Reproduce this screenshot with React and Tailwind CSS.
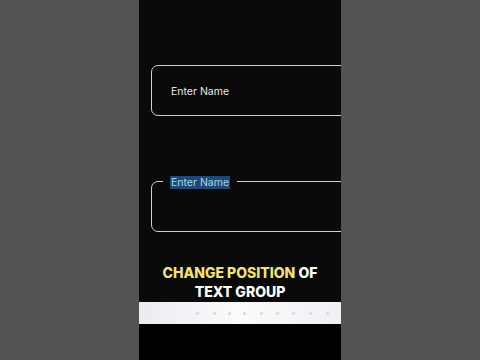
import React from 'react'

const dots = [196, 213, 228, 243, 260, 276, 292, 309, 326]

export default function App() {
  return (
    <div className="w-[480px] h-[360px] bg-[#535353] flex overflow-hidden"
      style={{ fontFamily: 'Inter, "Noto Sans", sans-serif' }}>
      <div className="ml-[139px] w-[202px] h-full bg-[#0a0a0a] overflow-hidden flex flex-col">
        {/* Plain input */}
        <div className="mt-[65px] ml-[12px] w-[230px] h-[51px] shrink-0 rounded-[7px] border border-[#cfcfcf]
          flex items-center pl-[19px] pt-[2px] text-[10.5px] text-[#e6e6e6]">
          Enter Name
        </div>

        {/* Input with moved label */}
        <div className="relative mt-[65px] ml-[12px] w-[230px] h-[51px] shrink-0 rounded-[7px] border border-[#cfcfcf]">
          <span className="absolute -top-[8px] left-[11px] px-[7px] bg-[#0a0a0a] leading-[12px]">
            <span className="bg-[#1c4a77] text-[#a8d0f2] text-[10.5px] px-[1px]">Enter Name</span>
          </span>
        </div>

        {/* Caption */}
        <div className="mt-[31px] text-center font-extrabold uppercase text-[14px] leading-[19px] text-white">
          <div><span className="text-[#f4e36a]">Change Position</span> of</div>
          <div>Text Group</div>
        </div>

        {/* Bottom bar */}
        <div className="mt-[1px] h-[22px] shrink-0 bg-gradient-to-r from-[#ecebf1] via-[#fbfbfd] to-[#f0f0f4] relative">
          {dots.map((x) => (
            <span key={x} className="absolute top-[10px] w-[3px] h-[3px] rounded-full bg-[#d6d6dc]"
              style={{ left: x - 139 }} />
          ))}
        </div>
        <div className="flex-1 bg-black" />
      </div>
    </div>
  )
}
